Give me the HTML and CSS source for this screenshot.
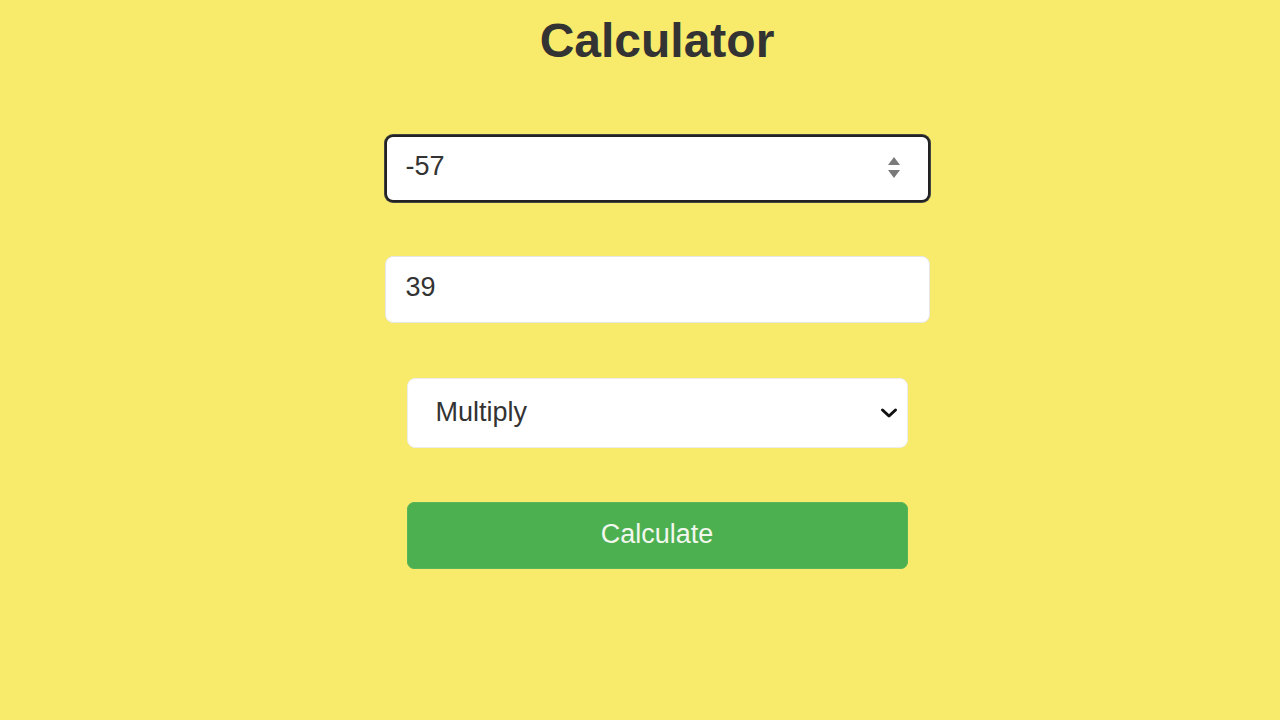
FILE: index.html
```html
<!DOCTYPE html>
<html lang="en">
<head>
<meta charset="utf-8">
<title>Calculator</title>
<link rel="stylesheet" href="styles.css">
</head>
<body>
<main class="calc">
  <h1 class="title">Calculator</h1>
  <div class="field field-focused">
    <input class="field-input" type="text" value="-57" aria-label="First number">
    <svg class="spinner" width="14" height="26" viewBox="0 0 14 26" aria-hidden="true">
      <path d="M7 2 L13 10 L1 10 Z" fill="#7a7a7a"/>
      <path d="M1 15 L13 15 L7 23 Z" fill="#7a7a7a"/>
    </svg>
  </div>
  <div class="field">
    <input class="field-input" type="text" value="39" aria-label="Second number">
  </div>
  <div class="select-wrap">
    <select class="select" aria-label="Operation">
      <option>Add</option>
      <option>Subtract</option>
      <option selected>Multiply</option>
      <option>Divide</option>
    </select>
    <svg class="chevron" width="18" height="12" viewBox="0 0 18 12" aria-hidden="true">
      <path d="M2.5 3 L9 9 L15.5 3" fill="none" stroke="#111" stroke-width="3" stroke-linecap="round" stroke-linejoin="round"/>
    </svg>
  </div>
  <button class="btn" type="button">Calculate</button>
</main>
</body>
</html>
```
FILE: styles.css
```css
html, body {
  margin: 0;
  padding: 0;
}
body {
  background: #f8ea6a;
  font-family: "Liberation Sans", Arial, sans-serif;
  min-height: 720px;
  padding-left: 34px;
  box-sizing: border-box;
}
.calc {
  display: flex;
  flex-direction: column;
  align-items: center;
}
.title {
  margin: 13px 0 0;
  font-size: 48px;
  line-height: 55px;
  font-weight: 700;
  color: #333;
}
.field {
  box-sizing: border-box;
  width: 545px;
  height: 67px;
  margin-top: 67px;
  background: #fff;
  border: 1px solid #e6e6e6;
  border-radius: 8px;
  display: flex;
  align-items: center;
  padding: 0 28px 0 20px;
}
.field + .field {
  margin-top: 54px;
}
.field-focused {
  border: 2px solid #222;
  box-shadow: 0 0 0 1px #444;
  padding-left: 19px;
  padding-right: 27px;
}
.field-input {
  flex: 1;
  min-width: 0;
  border: 0;
  outline: none;
  background: transparent;
  font-family: "Liberation Sans", Arial, sans-serif;
  font-size: 27px;
  color: #333;
  padding: 0;
  margin-top: -4px;
}
.spinner {
  flex: none;
  display: block;
  margin-top: -2px;
}
.select-wrap {
  box-sizing: border-box;
  width: 501px;
  height: 70px;
  margin-top: 55px;
  background: #fff;
  border: 1px solid #ececec;
  border-radius: 8px;
  display: flex;
  align-items: center;
  padding: 0 9px 0 28px;
}
.select {
  flex: 1;
  appearance: none;
  -webkit-appearance: none;
  border: 0;
  outline: none;
  background: transparent;
  font-family: "Liberation Sans", Arial, sans-serif;
  font-size: 27px;
  color: #333;
  padding: 0;
  margin-top: -2px;
}
.chevron {
  flex: none;
  display: block;
}
.btn {
  box-sizing: border-box;
  width: 501px;
  height: 67px;
  margin-top: 54px;
  background: #4caf50;
  border: 1px solid #58b55a;
  border-radius: 7px;
  color: #f2f7ee;
  font-family: "Liberation Sans", Arial, sans-serif;
  font-size: 27px;
  padding: 0 0 2px;
  cursor: pointer;
}
```
